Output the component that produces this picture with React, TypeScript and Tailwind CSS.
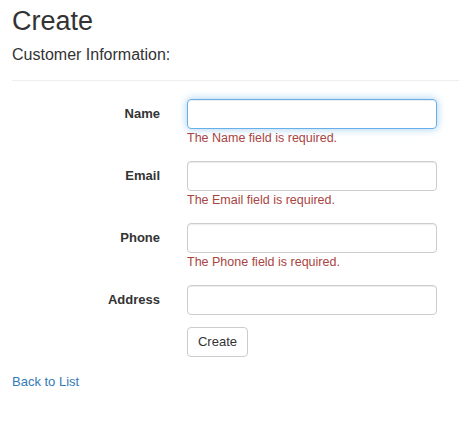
import { useState } from "react"

const fields = [
  { label: "Name", error: "The Name field is required.", focused: true },
  { label: "Email", error: "The Email field is required." },
  { label: "Phone", error: "The Phone field is required." },
  { label: "Address" },
]

function App() {
  const [values, setValues] = useState<Record<string, string>>({})

  return (
    <main className="min-h-screen bg-white pl-[12px] pr-[15px] font-['Liberation_Sans',Arial,sans-serif] text-[#333]">
      <h2 className="mt-[5px] text-[27px] leading-[32px] font-normal">Create</h2>
      <h4 className="mt-[8px] text-[16px] leading-[20px] font-normal">Customer Information:</h4>
      <hr className="mt-[15px] border-t border-[#eee]" />

      <form className="mt-[18px] flex flex-col" onSubmit={(e) => e.preventDefault()}>
        {fields.map((field) => (
          <div key={field.label} className={field.error ? "mb-[14px] flex gap-[27px]" : "mb-[12px] flex gap-[27px]"}>
            <label className="w-[148px] text-right text-[13px] leading-[30px] font-bold">
              {field.label}
            </label>
            <div className="flex w-[250px] flex-col">
              <input
                type="text"
                value={values[field.label] || ""}
                onChange={(e) => setValues({ ...values, [field.label]: e.target.value })}
                className={
                  field.focused
                    ? "h-[30px] w-full rounded-[4px] border border-[#66afe9] px-2 text-[13px] shadow-[inset_0_1px_1px_rgba(0,0,0,0.075),0_0_8px_rgba(102,175,233,0.6)] outline-none"
                    : "h-[30px] w-full rounded-[4px] border border-[#ccc] px-2 text-[13px] shadow-[inset_0_1px_1px_rgba(0,0,0,0.075)] outline-none"
                }
              />
              {field.error && (
                <span className="text-[12.5px] leading-[18px] text-[#a94442]">{field.error}</span>
              )}
            </div>
          </div>
        ))}

        <div className="flex pl-[175px]">
          <button
            type="submit"
            className="h-[30px] w-[61px] rounded-[4px] border border-[#ccc] bg-white text-[13px] text-[#333]"
          >
            Create
          </button>
        </div>
      </form>

      <div className="mt-[16px] text-[13px] leading-[18px]">
        <a href="#" className="text-[#337ab7]">
          Back to List
        </a>
      </div>
    </main>
  )
}

export default App
